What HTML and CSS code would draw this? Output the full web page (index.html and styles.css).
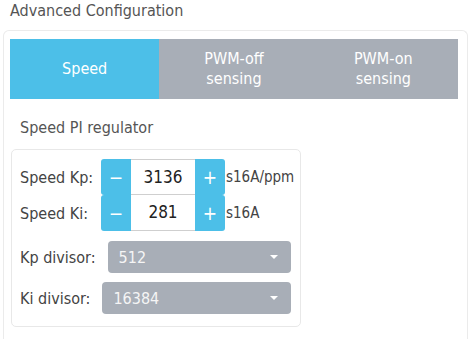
FILE: index.html
```html
<!DOCTYPE html>
<html lang="en">

<head>
    <meta charset="UTF-8">
    <title>Advanced Configuration</title>
    <link rel="stylesheet" href="styles.css">
</head>

<body>

    <h2 class="page-title">Advanced Configuration</h2>

    <div class="panel">
        <div class="tabs">
            <div class="tab active">Speed</div>
            <div class="tab">PWM-off<br>sensing</div>
            <div class="tab">PWM-on<br>sensing</div>
        </div>

        <h3 class="section-title">Speed PI regulator</h3>

        <div class="card">
            <div class="spin-row">
                <span class="label">Speed Kp:</span>
                <button class="spin-btn minus">&minus;</button>
                <span class="spin-value">3136</span>
                <button class="spin-btn plus">+</button>
                <span class="unit">s16A/ppm</span>
            </div>
            <div class="spin-row">
                <span class="label">Speed Ki:</span>
                <button class="spin-btn minus">&minus;</button>
                <span class="spin-value">281</span>
                <button class="spin-btn plus">+</button>
                <span class="unit">s16A</span>
            </div>

            <div class="select-row first">
                <span class="select-label">Kp divisor:</span>
                <div class="select">
                    <span>512</span>
                    <span class="caret"></span>
                </div>
            </div>
            <div class="select-row">
                <span class="select-label">Ki divisor:</span>
                <div class="select">
                    <span>16384</span>
                    <span class="caret"></span>
                </div>
            </div>
        </div>
    </div>

</body>
</html>
```

FILE: styles.css
```css
body {
    margin: 0;
    height: 339px;
    overflow: hidden;
    background-color: white;
    font-family: "DejaVu Sans Condensed", "Noto Sans", sans-serif;
    color: #444;
}

.page-title {
    margin: 0;
    height: 30px;
    box-sizing: border-box;
    padding: 1px 10px 0;
    font-size: 16px;
    line-height: 20px;
    font-weight: normal;
    color: #555;
}

/* outer panel runs on past the bottom of the window */
.panel {
    margin-left: 3px;
    width: 465px;
    height: 309px;
    box-sizing: border-box;
    border: 1px solid #ebebeb;
    border-bottom: none;
    border-radius: 6px 6px 0 0;
    padding: 8px 9px 0 6px;
}

.tabs {
    display: flex;
    height: 60px;
}

.tab {
    flex: 1;
    display: flex;
    align-items: center;
    justify-content: center;
    text-align: center;
    background-color: #a8aeb7;
    color: white;
    font-size: 16px;
    line-height: 20px;
}

.tab.active {
    background-color: #4cbfe8;
}

.section-title {
    margin: 19px 0 11px;
    padding-left: 10px;
    font-size: 16px;
    line-height: 20px;
    font-weight: normal;
    color: #555;
}

.card {
    margin-left: 1px;
    width: 290px;
    box-sizing: border-box;
    border: 1px solid #e8e8e8;
    border-radius: 5px;
    padding: 9px 9px 12px 8px;
}

.spin-row {
    display: flex;
    align-items: center;
    height: 36px;
}

.spin-row > * {
    flex: none;
}

.label {
    width: 81px;
    font-size: 16px;
}

.spin-btn {
    width: 30px;
    height: 36px;
    padding: 0;
    border: none;
    background-color: #4cbfe8;
    color: white;
    font-family: inherit;
    font-size: 19px;
    line-height: 36px;
}

.minus {
    border-radius: 3px 0 0 3px;
}

.plus {
    border-radius: 0 3px 3px 0;
}

.spin-value {
    width: 64px;
    height: 36px;
    box-sizing: border-box;
    border-top: 1px solid #cfcfcf;
    border-bottom: 1px solid #cfcfcf;
    text-align: center;
    line-height: 34px;
    font-size: 17px;
    color: #222;
}

.spin-row + .spin-row .spin-value {
    border-top: none;
}

.unit {
    margin-left: 1px;
    font-size: 15px;
    white-space: nowrap;
}

.select-row {
    display: flex;
    align-items: center;
    margin-top: 9px;
}

.select-row.first {
    margin-top: 10px;
}

.select-label {
    font-size: 16px;
    margin-right: 12px;
}

.select {
    flex: 1;
    display: flex;
    align-items: center;
    justify-content: space-between;
    height: 32px;
    padding: 0 13px 0 11px;
    border-radius: 4px;
    background-color: #a8aeb7;
    color: #f5f5f5;
    font-size: 16px;
}

.caret {
    width: 0;
    height: 0;
    border-left: 4px solid transparent;
    border-right: 4px solid transparent;
    border-top: 4px solid white;
}
```
